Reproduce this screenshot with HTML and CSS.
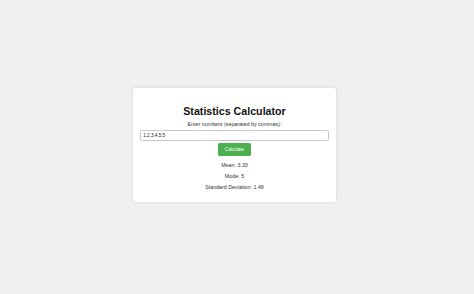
FILE: index.html
```html
<!DOCTYPE html>
<html lang="en">
<head>
<meta charset="utf-8">
<title>Statistics Calculator</title>
<link rel="stylesheet" href="styles.css">
</head>
<body>
  <main class="page">
    <section class="card">
      <h1 class="title">Statistics Calculator</h1>
      <label class="label" for="numbers">Enter numbers (separated by commas):</label>
      <input class="field" id="numbers" type="text" value="1,2,3,4,5,5">
      <button class="btn" type="button">Calculate</button>
      <div class="results">
        <p class="result">Mean: 3.33</p>
        <p class="result">Mode: 5</p>
        <p class="result">Standard Deviation: 1.49</p>
      </div>
    </section>
  </main>
</body>
</html>
```

FILE: styles.css
```css
html, body {
  margin: 0;
  padding: 0;
  background: #f0f0f0;
}

body {
  font-family: "Liberation Sans", Arial, sans-serif;
  color: #333;
}

.page {
  box-sizing: border-box;
  height: 100vh;
  display: flex;
  align-items: center;
  justify-content: center;
  padding-right: 5px;
  padding-bottom: 4px;
}

.card {
  box-sizing: border-box;
  width: 203px;
  padding: 6.67px;
  background: #fff;
  border-radius: 2.5px;
  box-shadow: 0 0 3.5px rgba(0, 0, 0, 0.12);
  text-align: center;
  font-size: 5.33px;
}

.title {
  margin: 10.2px 0 3.65px;
  font-size: 10.67px;
  line-height: 12.3px;
  font-weight: bold;
  color: #111;
}

.label {
  display: block;
  font-size: 5.33px;
  line-height: 6.1px;
  margin-bottom: 3.1px;
  color: #333;
}

.field {
  display: block;
  box-sizing: border-box;
  width: 100%;
  height: 11px;
  margin: 0 0 2px;
  padding: 0 2.5px;
  border: 1px solid #c9c9c9;
  border-radius: 1.5px;
  font-family: "Liberation Sans", Arial, sans-serif;
  font-size: 4.67px;
  color: #222;
  background: #fff;
  outline: none;
}

.btn {
  display: block;
  height: 13px;
  margin: 0 auto;
  padding: 0 6.67px;
  border: none;
  border-radius: 1.67px;
  background: #4caf50;
  color: #fff;
  font-family: "Liberation Sans", Arial, sans-serif;
  font-size: 4.67px;
  line-height: 13px;
  cursor: pointer;
}

.results {
  padding-top: 1.4px;
}

.result {
  margin: 5px 0;
  font-size: 5.33px;
  line-height: 6px;
  color: #333;
}
```
